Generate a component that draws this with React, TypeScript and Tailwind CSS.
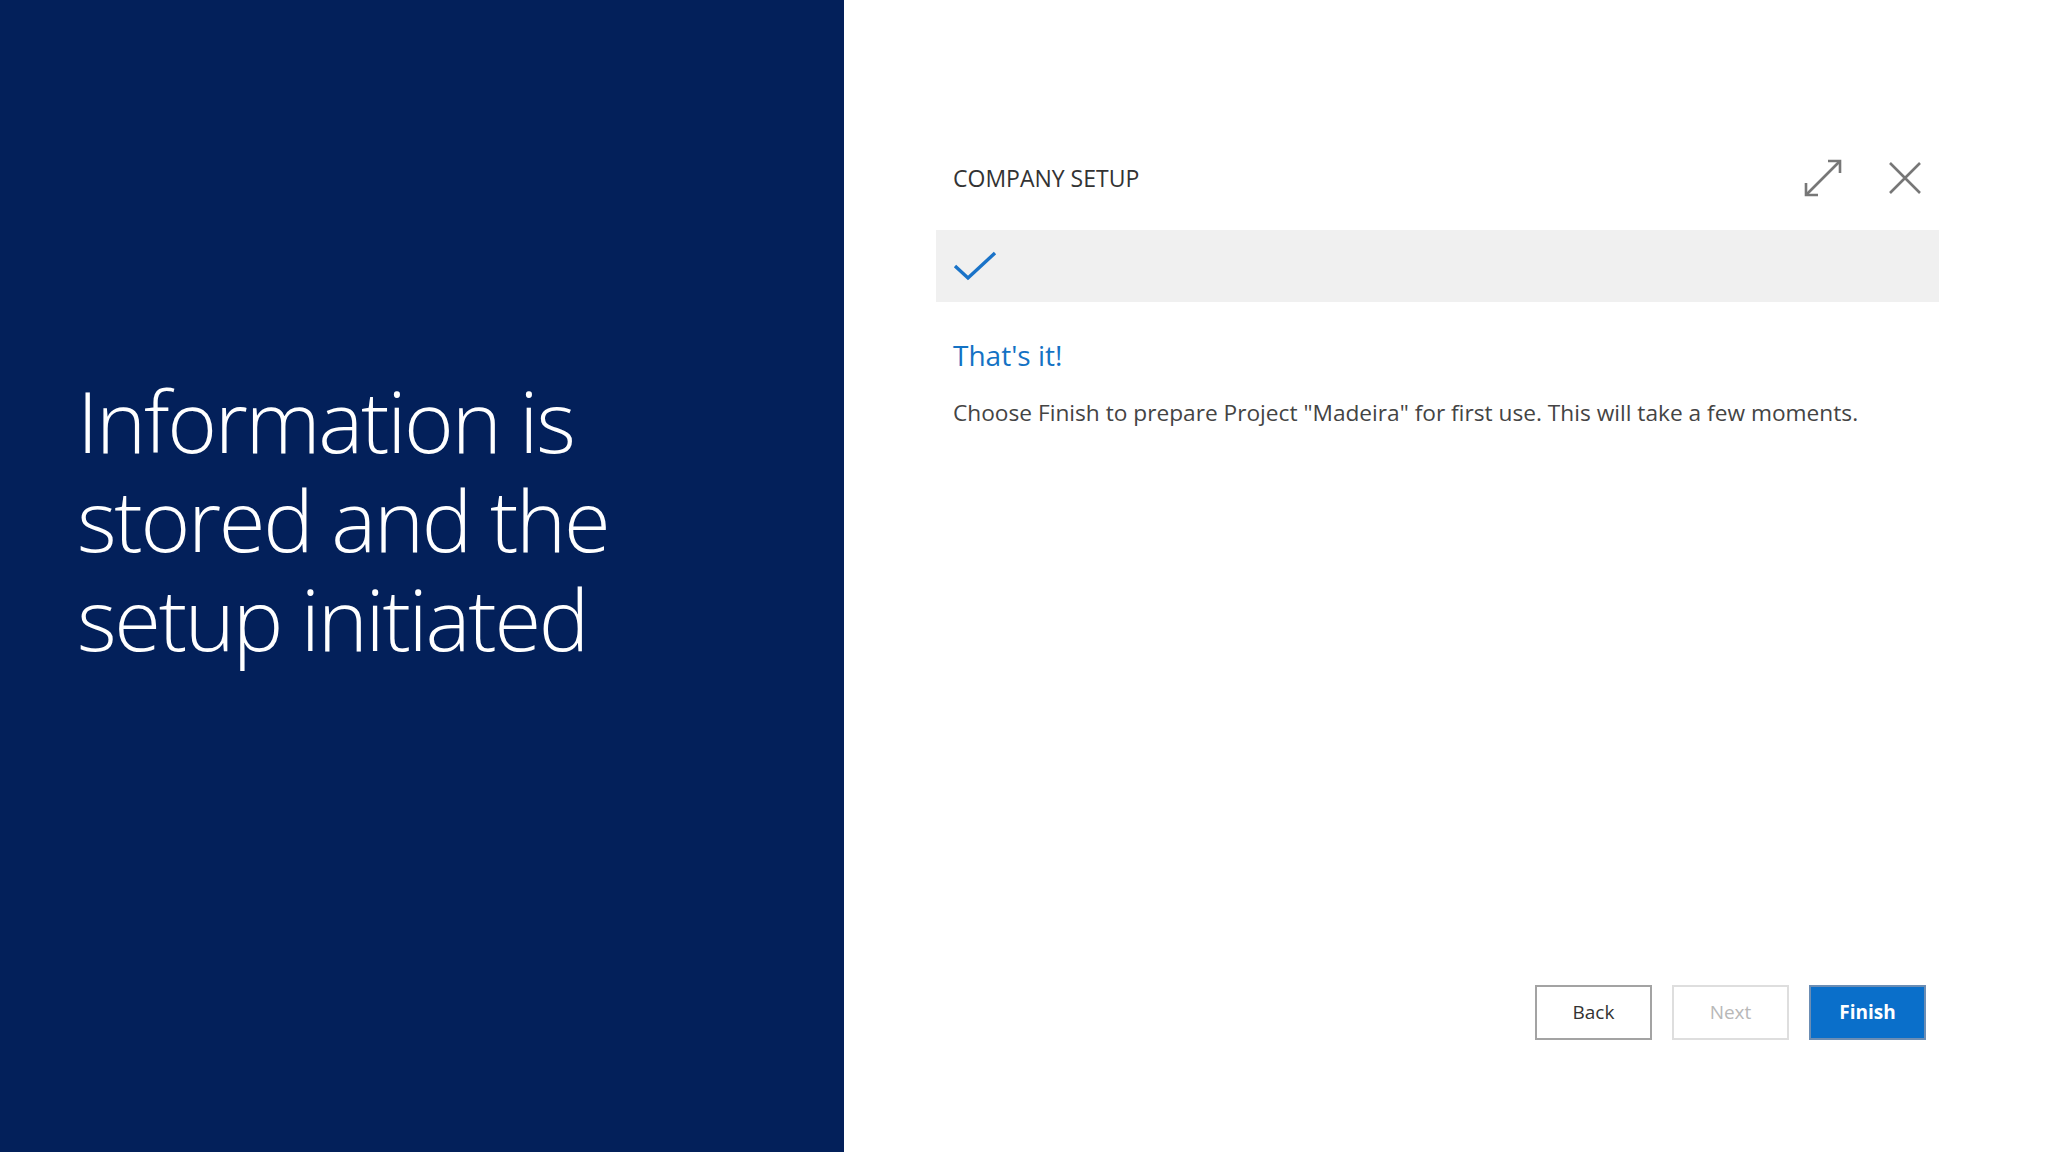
export default function App() {
    return <div className="flex w-screen h-screen font-['Segoe_UI','Open_Sans',sans-serif]">
        <div className="w-[844px] shrink-0 bg-[#03205a] pl-[77px] pt-[371px]">
            <h1 className="text-white font-light text-[85px] leading-[99px] tracking-[-2.3px]">
                <div className="h-[99px]">Information is</div>
                <div className="h-[99px]">stored and the</div>
                <div className="h-[99px]">setup initiated</div>
            </h1>
        </div>

        <div className="flex-1 flex flex-col bg-white pl-[92px] pr-[109px] pt-[158px]">
            <div className="flex items-center h-[40px] pl-[17px] pr-[17px]">
                <p className="text-[23px] text-[#333]">COMPANY SETUP</p>
                <button className="ml-auto w-[40px] h-[40px] text-[#777]">
                    <ExpandIcon />
                </button>
                <button className="ml-[45px] w-[34px] h-[34px] text-[#777]">
                    <CloseIcon />
                </button>
            </div>

            <div className="mt-[32px] h-[72px] bg-[#f0f0f0] flex items-center pl-[17px]">
                <CheckIcon />
            </div>

            <div className="pl-[17px]">
                <p className="mt-[35px] text-[28px] leading-[36px] text-[#1472c4]">That's it!</p>
                <p className="mt-[25px] text-[22.7px] leading-[30px] text-[#444]">
                    Choose Finish to prepare Project "Madeira" for first use. This will take a few moments.
                </p>
            </div>

            <div className="mt-auto mb-[112px] flex justify-end gap-[20px] pr-[13px]">
                <WizardButton label="Back" />
                <WizardButton label="Next" disabled />
                <WizardButton label="Finish" primary />
            </div>
        </div>
    </div>
}

interface WizardButtonProps {
    label: string,
    primary?: boolean,
    disabled?: boolean
}
function WizardButton({ label, primary, disabled }: WizardButtonProps) {
    let style = "bg-white border-[#a3a3a3] text-[#333]";
    if (primary) style = "bg-[#0a6fca] border-[#6b8db4] text-white font-bold";
    if (disabled) style = "bg-white border-[#dedede] text-[#b8b8b8]";
    return <button className={"w-[117px] h-[55px] border-2 text-[19px] " + style}>
        {label}
    </button>
}

function ExpandIcon() {
    return <svg viewBox="0 0 40 40" className="w-full h-full" fill="none" stroke="currentColor" strokeWidth="2.6">
        <path d="M3 37 L37 3" />
        <path d="M25 3 H37 V15" />
        <path d="M3 25 V37 H15" />
    </svg>
}

function CloseIcon() {
    return <svg viewBox="0 0 34 34" className="w-full h-full" fill="none" stroke="currentColor" strokeWidth="2.6">
        <path d="M2 2 L32 32 M32 2 L2 32" />
    </svg>
}

function CheckIcon() {
    return <svg viewBox="0 0 44 30" className="w-[44px] h-[30px]" fill="none" stroke="#1a73c8" strokeWidth="3.4">
        <path d="M2 15 L15 27 L42 2" />
    </svg>
}
